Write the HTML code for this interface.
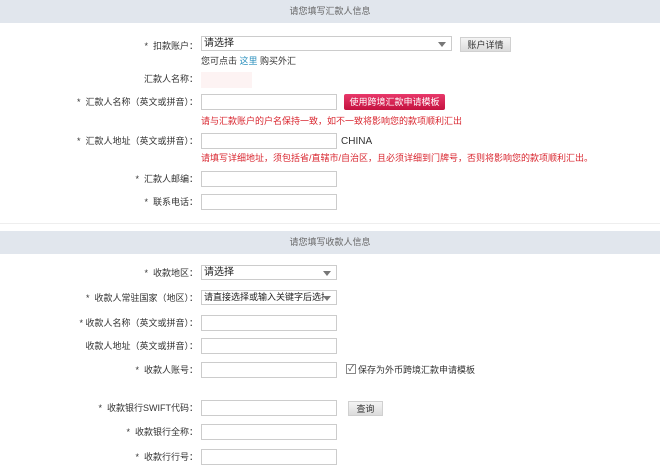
<!DOCTYPE html>
<html><head><meta charset="utf-8"><style>
body{margin:0;width:660px;height:465px;background:#fff;font-family:"Liberation Sans","Noto Sans CJK SC",sans-serif;font-size:9px;color:#333;position:relative;overflow:hidden}
.a{position:absolute}
.hd{left:0;width:660px;height:23px;background:#e1e6ed;text-align:center;line-height:23px;color:#666;font-size:9px}
.lb{right:462px;text-align:right;white-space:nowrap;line-height:12px}
.in{height:14px;border:1px solid #ccc;background:#fff;box-sizing:border-box}
.red{color:#d9262f;white-space:nowrap}
.btn{background:linear-gradient(#f4f4f4,#dcdcdc);border:1px solid #d0d0d0;text-align:center;line-height:14px;box-sizing:border-box;height:15px}
.sel{font-size:10px;line-height:13px;padding-left:2px;color:#222;white-space:nowrap;overflow:hidden}
.tri{position:absolute;right:5px;top:5px;width:0;height:0;border-left:4px solid transparent;border-right:4px solid transparent;border-top:5px solid #777;z-index:2}
</style></head><body>
<div class="a hd" style="top:0">请您填写汇款人信息</div>
<div class="a lb" style="top:40px">*&nbsp;&nbsp;扣款账户：</div>
<div class="a in sel" style="left:201px;top:36px;width:251px;height:15px">请选择<span class="tri"></span></div>
<div class="a btn" style="left:460px;top:37px;width:51px">账户详情</div>
<div class="a" style="left:201px;top:54px">您可点击 <span style="color:#2a8fbd">这里</span> 购买外汇</div>
<div class="a lb" style="top:73px">汇款人名称：</div>
<div class="a" style="left:201px;top:72px;width:51px;height:16px;background:#fdf3f3"></div>
<div class="a lb" style="top:96px">*&nbsp;&nbsp;汇款人名称（英文或拼音）：</div>
<div class="a in" style="left:201px;top:94px;width:136px;height:16px"></div>
<div class="a" style="left:344px;top:94px;width:101px;height:16px;background:linear-gradient(#e8386a,#c4123f);color:#fff;text-align:center;line-height:16px;border-radius:2px">使用跨境汇款申请模板</div>
<div class="a red" style="left:201px;top:114px">请与汇款账户的户名保持一致，如不一致将影响您的款项顺利汇出</div>
<div class="a lb" style="top:135px">*&nbsp;&nbsp;汇款人地址（英文或拼音）：</div>
<div class="a in" style="left:201px;top:133px;width:136px;height:16px"></div>
<div class="a" style="left:341px;top:136px;font-size:10px">CHINA</div>
<div class="a red" style="left:201px;top:151px">请填写详细地址，须包括省/直辖市/自治区，且必须详细到门牌号，否则将影响您的款项顺利汇出。</div>
<div class="a lb" style="top:173px">*&nbsp;&nbsp;汇款人邮编：</div>
<div class="a in" style="left:201px;top:171px;width:136px;height:16px"></div>
<div class="a lb" style="top:196px">*&nbsp;&nbsp;联系电话：</div>
<div class="a in" style="left:201px;top:194px;width:136px;height:16px"></div>
<div class="a" style="left:0;top:223px;width:660px;height:1px;background:#eee"></div>
<div class="a hd" style="top:231px">请您填写收款人信息</div>
<div class="a lb" style="top:267px">*&nbsp;&nbsp;收款地区：</div>
<div class="a in sel" style="left:201px;top:265px;width:136px;height:15px">请选择<span class="tri"></span></div>
<div class="a lb" style="top:292px">*&nbsp;&nbsp;收款人常驻国家（地区）：</div>
<div class="a in sel" style="left:201px;top:290px;width:136px;height:15px;font-size:9px"><span style="display:inline-block;width:120px;overflow:hidden">请直接选择或输入关键字后选择</span><span class="tri"></span></div>
<div class="a lb" style="top:317px">*&nbsp;收款人名称（英文或拼音）：</div>
<div class="a in" style="left:201px;top:315px;width:136px;height:16px"></div>
<div class="a lb" style="top:340px">收款人地址（英文或拼音）：</div>
<div class="a in" style="left:201px;top:338px;width:136px;height:16px"></div>
<div class="a lb" style="top:364px">*&nbsp;&nbsp;收款人账号：</div>
<div class="a in" style="left:201px;top:362px;width:136px;height:16px"></div>
<div class="a" style="left:346px;top:364px;width:8px;height:8px;border:1px solid #888;font-size:8px;line-height:8px;text-align:center">✓</div>
<div class="a" style="left:358px;top:363px">保存为外币跨境汇款申请模板</div>
<div class="a lb" style="top:402px">*&nbsp;&nbsp;收款银行SWIFT代码：</div>
<div class="a in" style="left:201px;top:400px;width:136px;height:16px"></div>
<div class="a btn" style="left:348px;top:401px;width:35px">查询</div>
<div class="a lb" style="top:426px">*&nbsp;&nbsp;收款银行全称：</div>
<div class="a in" style="left:201px;top:424px;width:136px;height:16px"></div>
<div class="a lb" style="top:451px">*&nbsp;&nbsp;收款行行号：</div>
<div class="a in" style="left:201px;top:449px;width:136px;height:16px"></div>
</body></html>
